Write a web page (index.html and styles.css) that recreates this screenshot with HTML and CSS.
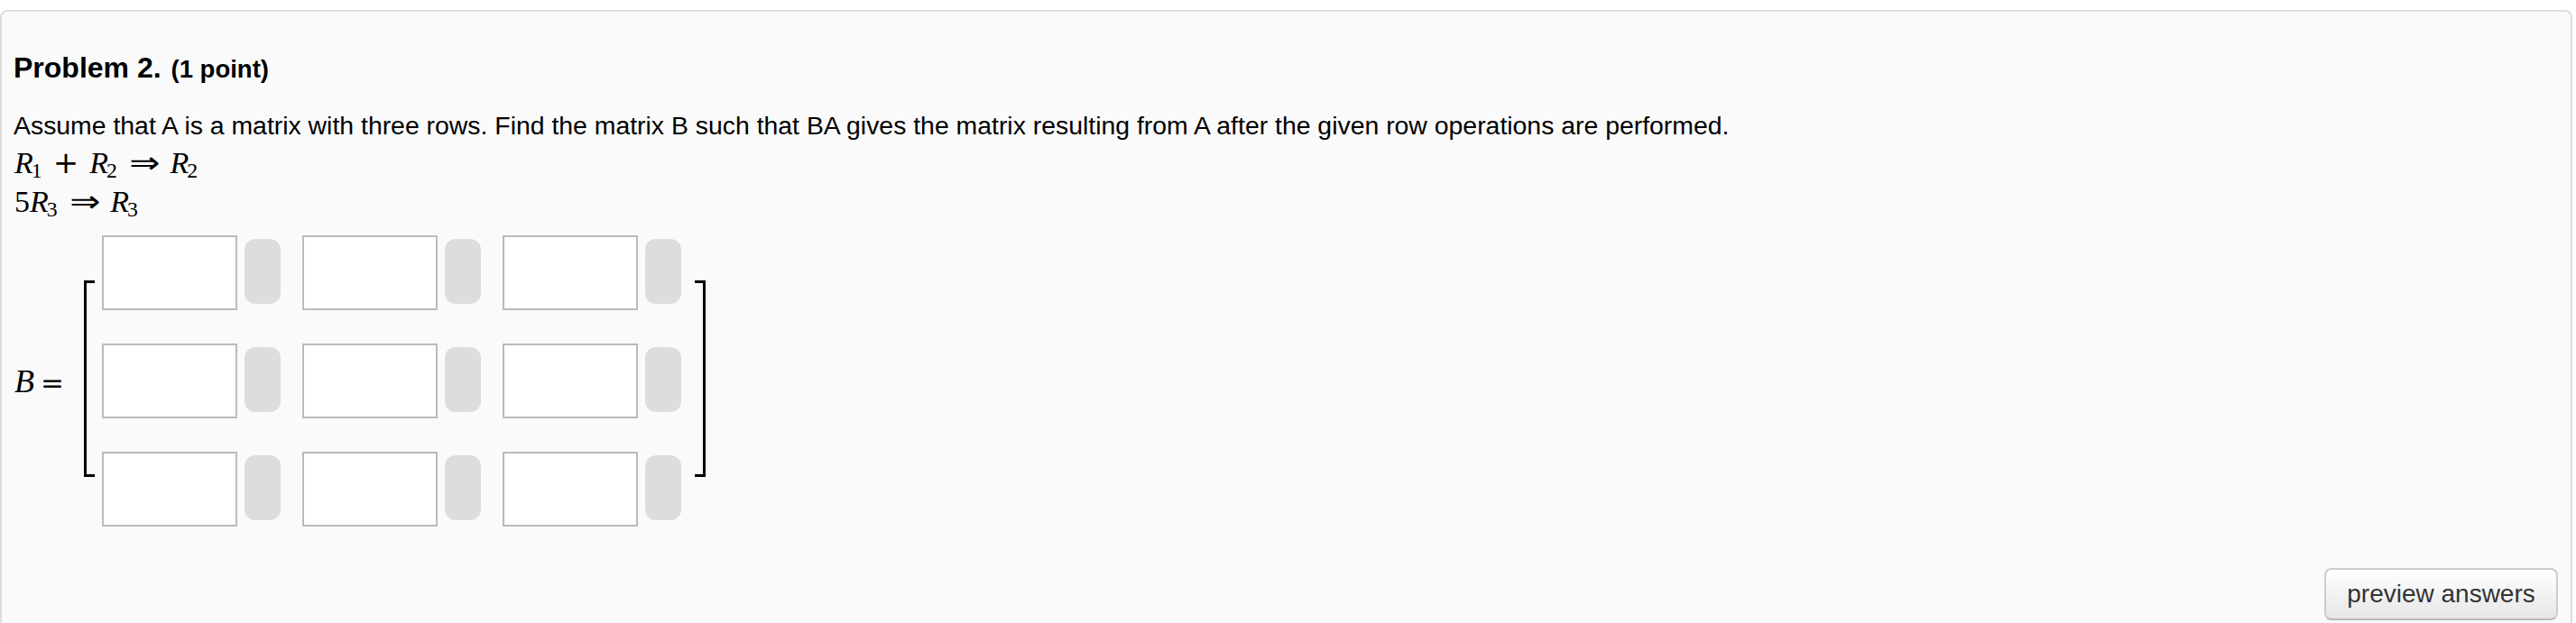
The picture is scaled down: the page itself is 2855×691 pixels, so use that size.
FILE: index.html
```html
<!DOCTYPE html>
<html>
<head>
<meta charset="utf-8">
<title>Problem 2</title>
<link rel="stylesheet" href="styles.css">
</head>
<body>
<div class="panel">
  <h3 class="title">Problem 2. <span class="points">(1 point)</span></h3>
  <p class="text">Assume that A is a matrix with three rows. Find the matrix B such that BA gives the matrix resulting from A after the given row operations are performed.</p>
  <div class="math-line"><span class="mi">R</span><span class="sub">1</span><span class="op">+</span><span class="mi">R</span><span class="sub">2</span><span class="op rel">⇒</span><span class="mi">R</span><span class="sub">2</span></div>
  <div class="math-line"><span class="mn">5</span><span class="mi">R</span><span class="sub">3</span><span class="op rel">⇒</span><span class="mi">R</span><span class="sub">3</span></div>
  <div class="matrix">
    <div class="lhs"><span class="mi">B</span><span class="eq">=</span></div>
    <div class="bracket left"></div>
    <div class="grid">
      <div class="cell"><span class="box"></span><span class="flag"></span></div>
      <div class="cell"><span class="box"></span><span class="flag"></span></div>
      <div class="cell"><span class="box"></span><span class="flag"></span></div>
      <div class="cell"><span class="box"></span><span class="flag"></span></div>
      <div class="cell"><span class="box"></span><span class="flag"></span></div>
      <div class="cell"><span class="box"></span><span class="flag"></span></div>
      <div class="cell"><span class="box"></span><span class="flag"></span></div>
      <div class="cell"><span class="box"></span><span class="flag"></span></div>
      <div class="cell"><span class="box"></span><span class="flag"></span></div>
    </div>
    <div class="bracket right"></div>
  </div>
  <div class="actions">
    <button class="preview" type="button">preview answers</button>
  </div>
</div>
</body>
</html>
```
FILE: styles.css
```css
html, body {
  margin: 0;
  padding: 0;
  background: #ffffff;
}

body {
  font-family: "Liberation Sans", Arial, Helvetica, sans-serif;
  color: #000;
}

.panel {
  margin: 11px 4px 0 0;
  border: 2px solid #dddddd;
  border-radius: 8px;
  background: #fafafa;
  padding: 45px 14px 30px 12px;
  min-height: 700px;
  box-sizing: border-box;
}

.title {
  margin: 0;
  font-size: 32px;
  line-height: 34px;
  font-weight: bold;
  padding-left: 1px;
}

.points {
  font-size: 27.5px;
  margin-left: 2px;
}

.text {
  margin: 28px 0 0 0;
  font-size: 28.4px;
  line-height: 34px;
  padding-left: 1px;
}

.math-line {
  font-family: "Liberation Serif", "Times New Roman", serif;
  font-size: 34px;
  line-height: 43px;
  height: 43px;
  padding-left: 2px;
  padding-top: 3px;
  margin-bottom: -3px;
  white-space: nowrap;
}

.mi {
  font-style: italic;
}

.mn {
  font-style: normal;
}

.sub {
  font-size: 0.7em;
  position: relative;
  top: 0.2em;
  margin-left: -2px;
}

.op {
  display: inline-block;
  margin: 0 12px 0 12px;
  font-family: "DejaVu Sans", sans-serif;
  font-size: 34px;
  line-height: 1;
}

.op.rel {
  margin: 0 14px 0 16px;
  transform: scaleX(1.2);
}

.matrix {
  margin-top: 19px;
  display: flex;
  align-items: center;
}

.lhs {
  width: 79px;
  padding-left: 2px;
  box-sizing: border-box;
  font-family: "Liberation Serif", "Times New Roman", serif;
  font-size: 36px;
  white-space: nowrap;
}

.eq {
  margin-left: 7px;
  font-family: "DejaVu Sans", sans-serif;
  font-size: 31px;
}

.bracket {
  width: 12px;
  height: 218px;
  box-sizing: border-box;
  border-top: 3px solid #000;
  border-bottom: 3px solid #000;
  margin-bottom: 5px;
}

.bracket.left {
  border-left: 3px solid #000;
}

.bracket.right {
  border-right: 3px solid #000;
  margin-left: 15px;
}

.grid {
  margin-left: 8px;
  display: grid;
  grid-template-columns: repeat(3, 198px);
  column-gap: 24px;
  row-gap: 37px;
}

.cell {
  display: flex;
  align-items: center;
  gap: 8px;
}

.box {
  display: block;
  width: 150px;
  height: 83px;
  box-sizing: border-box;
  border: 2px solid #bbbbbb;
  background: #ffffff;
}

.flag {
  display: block;
  width: 40px;
  height: 72px;
  border-radius: 12px;
  background: #dddddd;
  margin-bottom: 3px;
}

.actions {
  margin-top: 46px;
  display: flex;
  justify-content: flex-end;
}

.preview {
  width: 259px;
  height: 58px;
  box-sizing: border-box;
  border: 2px solid #cccccc;
  border-bottom-color: #b8b8b8;
  border-radius: 8px;
  background: linear-gradient(#ffffff, #e6e6e6);
  color: #333333;
  font-family: "Liberation Sans", Arial, Helvetica, sans-serif;
  font-size: 28px;
  padding: 0;
  margin-right: 0;
}
```
